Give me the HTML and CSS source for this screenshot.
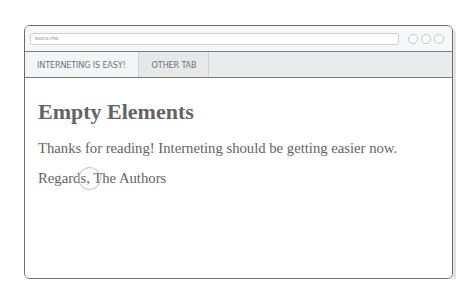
FILE: index.html
```html
<!DOCTYPE html>
<html lang="en">
<head>
    <meta charset="UTF-8">
    <title>Empty Elements</title>
    <link rel="stylesheet" href="styles.css">
</head>
<body>

    <div class="window">
        <!-- Title bar -->
        <div class="titlebar">
            <div class="address">BASICS.HTML</div>
            <span class="dot"></span>
            <span class="dot"></span>
            <span class="dot"></span>
        </div>

        <!-- Tabs -->
        <div class="tabs">
            <div class="tab active">INTERNETING IS EASY!</div>
            <div class="tab">OTHER TAB</div>
        </div>

        <!-- Page content -->
        <div class="content">
            <h1>Empty Elements</h1>
            <p>Thanks for reading! Interneting should be getting easier now.</p>
            <p>Regard<span class="mark">s,</span> The Authors</p>
        </div>
    </div>

</body>
</html>
```

FILE: styles.css
```css
/* Page */
body {
    margin: 0;
    background: white;
    font-family: "Liberation Serif", serif;
}

/* Browser window */
.window {
    width: 427px;
    height: 252px;
    margin: 25px 0 0 24px;
    border: 1.5px solid #6b6b6b;
    border-radius: 6px;
    box-shadow: 3px 3px 0 #e2e2e2;
    overflow: hidden;
    display: flex;
    flex-direction: column;
}

/* Title bar */
.titlebar {
    height: 25px;
    background: #f6f7f8;
    border-bottom: 1px solid #7a7a7a;
    display: flex;
    align-items: center;
    padding: 0 8px 0 5px;
    gap: 3px;
}

.address {
    flex: 1;
    height: 10px;
    background: white;
    border: 1px solid #d0d0d0;
    border-radius: 2px;
    margin-right: 6px;
    font-family: "DejaVu Sans Condensed", sans-serif;
    font-size: 4px;
    line-height: 10px;
    color: #888;
    padding-left: 4px;
}

.dot {
    width: 8px;
    height: 8px;
    border: 1px solid #c4c4c4;
    border-radius: 50%;
    background: white;
}

/* Tabs */
.tabs {
    height: 25px;
    background: #e9ebed;
    border-bottom: 1px solid #7a7a7a;
    display: flex;
}

.tab {
    padding: 0 12px 0 13px;
    display: flex;
    align-items: center;
    border-right: 1px solid #cfd2d5;
    font-family: "DejaVu Sans Condensed", sans-serif;
    font-size: 9px;
    letter-spacing: -0.15px;
    color: #707377;
    background: #e6e8ea;
}

.tab.active {
    background: #f4f5f6;
    padding-left: 12px;
}

/* Content */
.content {
    flex: 1;
    background: white;
    padding: 0 13px;
    color: #636363;
}

h1 {
    font-size: 22px;
    margin: 21px 0 0;
}

p {
    font-size: 14.7px;
    margin: 13px 0 0;
}

h1 + p {
    margin-top: 15px;
}

/* Circle drawn over "s," */
.mark {
    position: relative;
}

.mark::after {
    content: "";
    position: absolute;
    left: -2px;
    top: -3px;
    width: 21px;
    height: 21px;
    border: 1px solid #bdbdbd;
    border-radius: 50%;
}
```
